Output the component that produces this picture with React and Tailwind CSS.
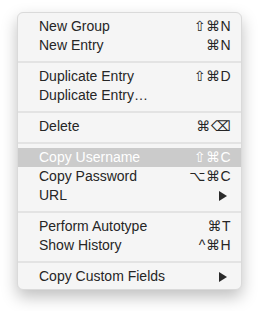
import { Fragment } from "react";

const groups = [
    [
        { label: "New Group", keys: "⇧⌘N" },
        { label: "New Entry", keys: "⌘N" },
    ],
    [
        { label: "Duplicate Entry", keys: "⇧⌘D" },
        { label: "Duplicate Entry…", keys: "" },
    ],
    [{ label: "Delete", keys: "⌘⌫" }],
    [
        { label: "Copy Username", keys: "⇧⌘C", active: true },
        { label: "Copy Password", keys: "⌥⌘C" },
        { label: "URL", submenu: true },
    ],
    [
        { label: "Perform Autotype", keys: "⌘T" },
        { label: "Show History", keys: "^⌘H" },
    ],
    [{ label: "Copy Custom Fields", submenu: true }],
];

function Arrow({ active }) {
    return (
        <svg width="8" height="10" viewBox="0 0 8 10" className="mr-[4px]">
            <path d="M0 0 L8 5 L0 10 Z" fill={active ? "#fff" : "#2a2a2a"} />
        </svg>
    );
}

function Row({ item }) {
    return (
        <div
            className={[
                "flex h-[19px] items-center justify-between pl-[21px] pr-[10px]",
                item.active ? "bg-[#cbcbcb] text-white" : "text-[#262626]",
            ].join(" ")}
        >
            <span className="whitespace-nowrap">{item.label}</span>
            {item.submenu ? (
                <Arrow active={item.active} />
            ) : (
                <span className="whitespace-nowrap tracking-[0.5px]">{item.keys}</span>
            )}
        </div>
    );
}

export default function App() {
    return (
        <div className="h-[311px] w-[258px] bg-white pt-[12px] pl-[17px]">
            <div
                className="w-[225px] rounded-[6px] border border-[#dadada] bg-[#f5f5f5] pt-[4px] pb-[3px] text-[14px] leading-[19px] shadow-[0_7px_16px_rgba(0,0,0,0.25)]"
                style={{ fontFamily: '"Liberation Sans", "DejaVu Sans", sans-serif' }}
            >
                {groups.map((g, i) => (
                    <Fragment key={i}>
                        {i > 0 && <div className="mt-[6px] mb-[4px] h-[2px] bg-[#e3e3e3]" />}
                        {g.map((item) => (
                            <Row key={item.label} item={item} />
                        ))}
                    </Fragment>
                ))}
            </div>
        </div>
    );
}
